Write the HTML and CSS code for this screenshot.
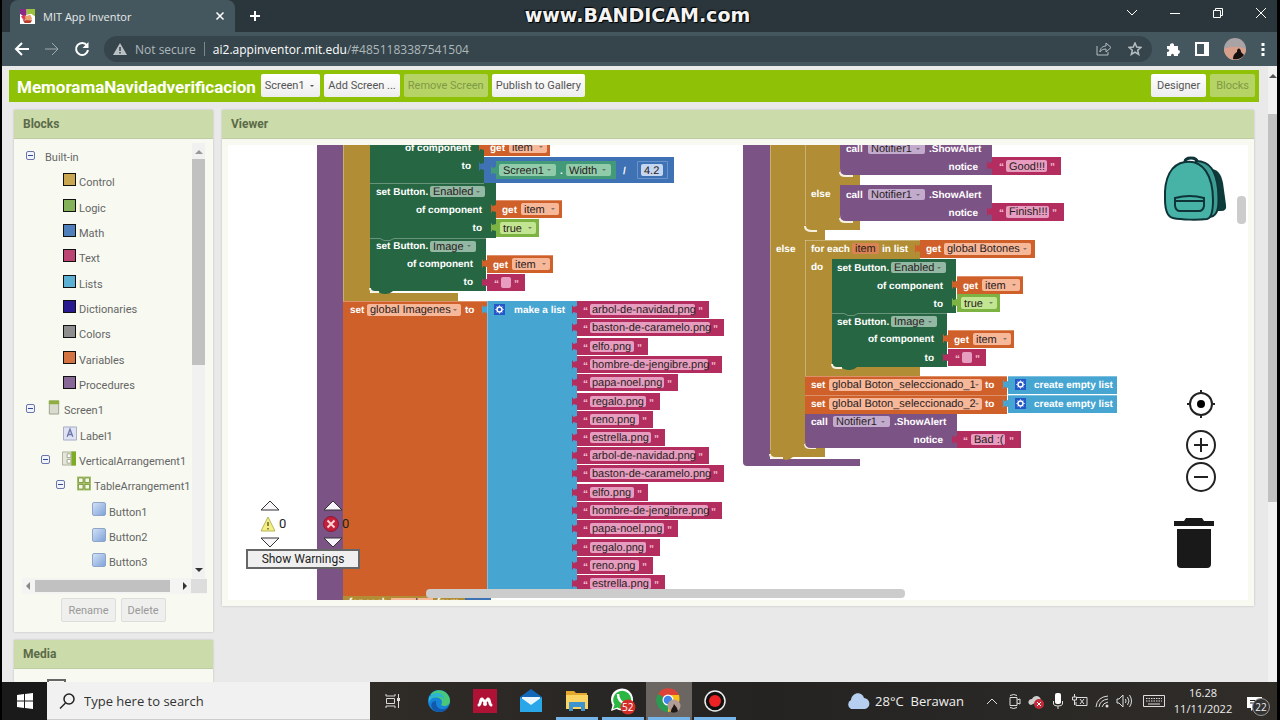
FILE: index.html
```html
<!DOCTYPE html>
<html lang="en">
<head>
<meta charset="utf-8">
<title>MIT App Inventor</title>
<link rel="stylesheet" href="styles.css">
</head>
<body>
<div class="desktop">
  <header class="tabs">
    <div class="tab">
      <svg class="fav" viewBox="0 0 16 16"><path fill="#fff" d="M0 0h16v16H0z"/><path fill="#8a2a86" d="M0 0h7v6L4 8 0 5z"/><path fill="#9bc23c" d="M7 0h9v8l-4-3-5 1z"/><path fill="#d83b5c" d="M1 8l5-2 2 4-4 2z"/><path fill="#e9a06b" d="M5 8l6-2 2 5-6 2z"/><path fill="#b63b2c" d="M3 12h10l-2 3H5z"/></svg>
      <span class="tabname">MIT App Inventor</span>
      <button class="ib" aria-label="Close tab"><svg width="10" height="10" viewBox="0 0 10 10"><path class="ln" stroke-width="1.500" d="M1.500 1.500l7 7M8.500 1.500l-7 7"/></svg></button>
    </div>
    <button class="ib newtab" aria-label="New tab"><svg width="12" height="12" viewBox="0 0 12 12"><path class="ln w2" d="M6 1v10M1 6h10"/></svg></button>
    <div class="winctl">
      <button class="ib" aria-label="Search tabs"><svg width="12" height="12" viewBox="0 0 12 12"><path class="ln" d="M1 3l5 5 5-5"/></svg></button>
      <button class="ib" aria-label="Minimize"><svg width="12" height="12" viewBox="0 0 12 12"><path class="ln" d="M1 6.500h10"/></svg></button>
      <button class="ib" aria-label="Restore"><svg width="12" height="12" viewBox="0 0 12 12"><path class="ln" d="M1.500 3.500h7v7h-7zM3.500 3.500v-2h7v7h-2"/></svg></button>
      <button class="ib" aria-label="Close"><svg width="12" height="12" viewBox="0 0 12 12"><path class="ln" d="M1 1l10 10M11 1L1 11"/></svg></button>
    </div>
  </header>
  <div class="watermark">www.BANDICAM.com</div>
  <nav class="toolbar">
    <button class="ib" aria-label="Back"><svg width="16" height="16" viewBox="0 0 16 16"><path class="ln w2" d="M15 8H2M8 2L2 8l6 6"/></svg></button>
    <button class="ib dim" aria-label="Forward"><svg width="16" height="16" viewBox="0 0 16 16"><path class="ln" d="M1 8h13M8 2l6 6-6 6"/></svg></button>
    <button class="ib" aria-label="Reload"><svg width="16" height="16" viewBox="0 0 16 16"><path class="ln w2" d="M13 4.500A6 6 0 1 0 14 9"/><path fill="#fff" d="M14.500 1v6h-6z"/></svg></button>
    <div class="omni">
      <svg width="14" height="14" viewBox="0 0 14 14"><path fill="#b9c1c4" d="M7 1l7 12H0z"/><path stroke="#36454c" stroke-width="1.500" d="M7 5v4M7 10v1.500"/></svg>
      <span class="unsafe">Not secure</span><span class="bar"></span>
      <span class="url"><b>ai2.appinventor.mit.edu</b>/#4851183387541504</span>
      <svg class="push" width="16" height="14" viewBox="0 0 16 14"><path class="lg" d="M1 4v9h11v-3M4 10c0-4 3-6 6-6V1l5 4.500L10 10V7C7 7 5 8 4 10z"/></svg>
      <svg width="14" height="14" viewBox="0 0 14 14"><path class="lg" stroke-width="1.500" d="M7 1l1.700 4 4.300.400-3.300 2.900 1 4.200L7 10.200 3.300 12.500l1-4.200L1 5.400 5.300 5z"/></svg>
    </div>
    <div class="ext">
      <svg width="14" height="14" viewBox="0 0 14 14"><path fill="#fff" d="M1 4h3C3 1 8 0 8 3v1h4v4c3 0 2 4 0 4v2H8c0-3-3-3-3 0H1v-4c3 0 3-3 0-3z"/></svg>
      <svg width="14" height="14" viewBox="0 0 14 14"><path fill="#fff" d="M0 0h14v14H0zM2 2v10h7V2z" fill-rule="evenodd"/></svg>
      <svg width="22" height="22" viewBox="0 0 22 22"><circle cx="11" cy="11" r="11" fill="#a9a3a5"/><path fill="#d89f8b" d="M0 11a11 11 0 0 0 22 0c-7-3-14-3-22 0z"/><path fill="#15100f" d="M9 21c0-4 2-6 4-7 0-5 4-4 4 0l3 3c-3 4-7 5-11 4z"/></svg>
      <svg width="4" height="14" viewBox="0 0 4 14"><path fill="#fff" d="M.5 1h3v3h-3zM.5 6h3v3h-3zM.5 11h3v3h-3z"/></svg>
    </div>
  </nav>

  <div class="page">
    <main class="app">
      <div class="project">
        <h1>MemoramaNavidadverificacion</h1>
        <button class="btn">Screen1 <i class="car"></i></button>
        <button class="btn">Add Screen ...</button>
        <button class="btn off" disabled>Remove Screen</button>
        <button class="btn">Publish to Gallery</button>
        <button class="btn view push">Designer</button>
        <button class="btn off" disabled>Blocks</button>
      </div>
      <div class="cols">
        <aside class="side">
          <section class="panel">
            <h2>Blocks</h2>
            <div class="treebox">
              <ul class="tree">
                <li><button class="tg" aria-label="Collapse"></button><span class="t1">Built-in</span></li>
                <li class="d1"><i class="sw control"></i>Control</li>
                <li class="d1"><i class="sw logic"></i>Logic</li>
                <li class="d1"><i class="sw math"></i>Math</li>
                <li class="d1"><i class="sw text"></i>Text</li>
                <li class="d1"><i class="sw lists"></i>Lists</li>
                <li class="d1"><i class="sw dict"></i>Dictionaries</li>
                <li class="d1"><i class="sw colors"></i>Colors</li>
                <li class="d1"><i class="sw vars"></i>Variables</li>
                <li class="d1"><i class="sw procs"></i>Procedures</li>
                <li><button class="tg" aria-label="Collapse"></button><svg class="ci" viewBox="0 0 15 15"><path fill="#d9dbcf" stroke="#9ba08c" d="M2.500.5h10v14h-10z"/><path fill="#8fae3f" d="M2 0h11v4H2z"/></svg>Screen1</li>
                <li class="d1"><svg class="ci" viewBox="0 0 15 15"><path fill="#dfe2f2" stroke="#a3a8c4" d="M.5.5h14v14H.5z"/><path fill="none" stroke="#6f78ad" stroke-width="1.500" d="M4.500 11L7.500 3l3 8M5.500 8.500h4"/></svg>Label1</li>
                <li class="d2"><button class="tg" aria-label="Collapse"></button><svg class="ci" viewBox="0 0 15 15"><path fill="#e3e6d8" stroke="#a9ad98" d="M.5.5h14v14H.5z"/><path fill="#7dac25" d="M10 0h5v15h-5z"/><path fill="#fff" stroke="#a0a48e" d="M5.500 2.500h4v4h-4zM5.500 8.500h4v4h-4z"/></svg>VerticalArrangement1</li>
                <li class="d3"><button class="tg" aria-label="Collapse"></button><svg class="ci" viewBox="0 0 15 15"><path fill="#a9c46c" d="M0 0h15v15H0z"/><path fill="#f4f7e8" stroke="#7b9640" d="M1.500 1.500h5v5h-5zM8.500 1.500h5v5h-5zM1.500 8.500h5v5h-5zM8.500 8.500h5v5h-5z"/></svg>TableArrangement1</li>
                <li class="d4"><i class="bi"></i>Button1</li>
                <li class="d4"><i class="bi"></i>Button2</li>
                <li class="d4"><i class="bi"></i>Button3</li>
                <li class="d4"><i class="bi"></i></li>
              </ul>
              <div class="vs"><i class="up"></i><i class="th"></i><i class="dn"></i></div>
            </div>
            <div class="hs"><i class="lf"></i><i class="th"></i><i class="rt"></i><i class="corner"></i></div>
            <div class="acts"><button class="btn off2" disabled>Rename</button><button class="btn off2" disabled>Delete</button></div>
          </section>
          <section class="panel media">
            <h2>Media</h2>
            <div class="upload"></div>
          </section>
        </aside>
        <section class="panel viewer">
          <h2>Viewer</h2>
          <div class="ws">
            <svg class="blocks" width="1020" height="455" viewBox="228 145 1020 455" role="img" aria-label="Blocks workspace">
              <defs>
                <path id="tab" d="M0 0l-4 1v-2l-1 1v7l1 1v-2l4 1z"/>
                <path id="car" d="M0 0h4l-2 2z" fill="#555" fill-opacity=".7"/>
                <g id="gear"><path fill="#2458c8" d="M0 0h11v11H0z"/><circle cx="5.500" cy="5.500" r="2.500" fill="none" stroke="#fff" stroke-width="1.500"/><path stroke="#fff" stroke-opacity=".6" d="M5.500 1v1.500M5.500 8.500V10M1 5.500h1.500M8.500 5.500H10M2.500 2.500l1 1M7.500 7.500l1 1M8.500 2.500l-1 1M3.500 7.500l-1 1"/></g>
                <g id="get"><path class="or" d="M0 0h66v18H0z"/><use href="#tab" class="or" y="5"/><path class="edge" d="M0 .5h66"/><rect class="cor" x="25" y="3" width="38" height="12" rx="2"/><text class="b" x="6" y="13">get</text><text x="28" y="13">item</text><use href="#car" x="55" y="8"/></g>
                <g id="true"><path class="lgn" d="M0 0h43v18H0z"/><use href="#tab" class="lgn" y="5"/><rect class="cgn" x="4" y="3" width="36" height="12" rx="2"/><text x="7" y="13">true</text><use href="#car" x="32" y="8"/></g>
                <g id="empty"><path class="pk" d="M0 0h38v17H0z"/><use href="#tab" class="pk" y="5"/><rect class="cpk" x="14" y="3" width="10" height="11" rx="2"/><text class="q" x="7" y="13">“</text><text class="q" x="27" y="13">”</text></g>
              </defs>

              <path class="pu" d="M317 145h26v455h-26z"/>
              <path class="go" d="M343 145h27v148h88v8H343z"/>
              <path class="gr" d="M370 145h114v38h12v55h-10v53h-93q-3 3-8 3t-8-3h-4q-3 0-3-3z"/>
              <path class="edge" d="M370 183.500h114M370 238.500h10l4 2h6l4-2h92M343.500 145v455"/><path class="lip" d="M370 288q0 4 5 4h4"/>
              <text class="b e" x="471" y="151">of component</text>
              <use href="#get" x="484" y="138"/>
              <text class="b e" x="471" y="169">to</text>
              <path class="ma" d="M484 157h190v26H484z"/><use href="#tab" class="ma" x="484" y="163"/>
              <path class="tl" d="M496 161h120v18H496z"/><use href="#tab" class="tl" x="496" y="167"/>
              <rect class="ctl" x="499" y="164" width="57" height="12" rx="2"/><text x="503" y="174">Screen1</text><use href="#car" x="547" y="169"/>
              <rect class="ctl" x="566" y="164" width="45" height="12" rx="2"/><text x="569" y="174">Width</text><use href="#car" x="602" y="169"/>
              <text class="b" x="560" y="174">.</text><text class="b" x="623" y="174">/</text>
              <path class="slot" d="M637.500 161.500h30v17h-30z"/><rect class="cma" x="641" y="164" width="22" height="12" rx="2"/><text x="644" y="174">4.2</text>
              <text class="b" x="376" y="195">set Button.</text><rect class="cgr" x="430" y="186" width="55" height="11" rx="2"/><text x="433" y="195">Enabled</text><use href="#car" x="476" y="191"/>
              <text class="b e" x="482" y="213">of component</text><use href="#get" x="496" y="200"/>
              <text class="b e" x="482" y="231">to</text><use href="#true" x="496" y="219"/>
              <text class="b" x="376" y="249">set Button.</text><rect class="cgr" x="430" y="241" width="46" height="11" rx="2"/><text x="433" y="250">Image</text><use href="#car" x="467" y="245"/>
              <text class="b e" x="473" y="267">of component</text><use href="#get" x="487" y="255"/>
              <text class="b e" x="473" y="285">to</text><use href="#empty" x="487" y="274"/>

              <path class="or" d="M343 301h144v295H343z"/><path class="edge" d="M343 301.500h144"/>
              <text class="b" x="350" y="313">set</text><rect class="cor" x="367" y="304" width="94" height="12" rx="2"/><text x="370" y="313">global Imagenes</text><use href="#car" x="453" y="309"/><text class="b" x="465" y="313">to</text>
              <path class="bl" d="M487 301h90v295h-90z"/><use href="#tab" class="bl" x="487" y="306"/><path class="edge" d="M487.500 301v295"/>
              <use href="#gear" x="494" y="304"/><text class="b" x="514" y="313">make a list</text>
              <g id="names">
                <path class="pk" d="M577 301h132v17H577zM577 319h147v17H577zM577 338h71v17h-71zM577 356h145v17H577zM577 374h101v17H577zM577 393h83v17h-83zM577 411h76v17h-76zM577 429h88v17h-88z"/>
                <g class="pk"><use href="#tab" x="577" y="306"/><use href="#tab" x="577" y="324"/><use href="#tab" x="577" y="343"/><use href="#tab" x="577" y="361"/><use href="#tab" x="577" y="379"/><use href="#tab" x="577" y="398"/><use href="#tab" x="577" y="416"/><use href="#tab" x="577" y="434"/></g>
                <g class="cpk"><rect x="590" y="304" width="105" height="11" rx="2"/><rect x="590" y="322" width="120" height="11" rx="2"/><rect x="590" y="341" width="44" height="11" rx="2"/><rect x="590" y="359" width="118" height="11" rx="2"/><rect x="590" y="377" width="74" height="11" rx="2"/><rect x="590" y="396" width="56" height="11" rx="2"/><rect x="590" y="414" width="49" height="11" rx="2"/><rect x="590" y="432" width="61" height="11" rx="2"/></g>
                <text x="592" y="313">arbol-de-navidad.png</text><text x="592" y="331">baston-de-caramelo.png</text><text x="592" y="350">elfo.png</text><text x="592" y="368">hombre-de-jengibre.png</text><text x="592" y="386">papa-noel.png</text><text x="592" y="405">regalo.png</text><text x="592" y="423">reno.png</text><text x="592" y="441">estrella.png</text>
                <g class="q"><text x="583" y="314">“</text><text x="583" y="332">“</text><text x="583" y="351">“</text><text x="583" y="369">“</text><text x="583" y="387">“</text><text x="583" y="406">“</text><text x="583" y="424">“</text><text x="583" y="442">“</text><text x="698" y="314">”</text><text x="713" y="332">”</text><text x="637" y="351">”</text><text x="711" y="369">”</text><text x="667" y="387">”</text><text x="649" y="406">”</text><text x="642" y="424">”</text><text x="654" y="442">”</text></g>
              </g>
              <use href="#names" y="146"/>
              <path class="go" d="M343 596h122v4H343z"/><path class="ma" d="M465 596h26v4h-26z"/>
              <text class="b" x="349" y="605">for each</text><rect class="cor" x="391" y="598" width="42" height="11"/><text x="394" y="606">number</text><text class="b" x="437" y="605">from</text>

              <path class="pu" d="M743 145h27v314h90v7H747q-4 0-4-4z"/>
              <path class="go" d="M770 145h70v30h20v10h-20v36h20v9h-35v10h95v136h-115v71h20v10h-32q-3 3-7 3t-7-3h-5q-4 0-4-4z"/>
              <path class="gr" d="M832 259h124v54h-9v54h-90q-3 3-8 3t-8-3h-6q-3 0-3-3z"/>
              <path class="edge" d="M770.500 145v305M805.500 145v80M805.500 240v200M805 240.500h115M832 313.500h12l4 2h6l4-2h89"/>
              <path class="lip" d="M770 454q0 4 5 4h8M805 226q0 5 7 5h5M840 172q0 4 5 4h8M840 218q0 4 5 4h8M805 444q0 4 5 4h6M832 364q0 4 5 4h5"/>
              <path class="pu" d="M840 145h152v30H846q-6 0-6-6zM840 185h152v36H846q-6 0-6-6zM805 413h152v35H811q-6 0-6-6z"/>
              <g id="call"><text class="b" x="846" y="152">call</text><rect class="cpu" x="868" y="143" width="57" height="11" rx="2"/><text x="871" y="152">Notifier1</text><use href="#car" x="916" y="148"/><text class="b" x="929" y="152">.ShowAlert</text><text class="b e" x="978" y="170">notice</text></g>
              <use href="#call" y="46"/><use href="#call" x="-35" y="273"/>
              <path class="pk" d="M992 157h69v18h-69zM992 203h72v18h-72zM957 431h64v17h-64z"/>
              <g class="pk"><use href="#tab" x="992" y="162"/><use href="#tab" x="992" y="208"/><use href="#tab" x="957" y="436"/></g>
              <g class="cpk"><rect x="1006" y="160" width="41" height="12" rx="2"/><rect x="1006" y="206" width="43" height="12" rx="2"/><rect x="971" y="434" width="34" height="11" rx="2"/></g>
              <text x="1009" y="170">Good!!!</text><text x="1009" y="215">Finish!!!</text><text x="974" y="443">Bad :(</text>
              <g class="q"><text x="999" y="170">“</text><text x="1050" y="170">”</text><text x="999" y="216">“</text><text x="1052" y="216">”</text><text x="963" y="444">“</text><text x="1009" y="444">”</text></g>
              <text class="b" x="811" y="197">else</text><text class="b" x="776" y="252">else</text>
              <text class="b" x="811" y="252">for each</text><rect class="itm" x="852" y="243" width="27" height="11" rx="2"/><text x="855" y="252">item</text><text class="b" x="882" y="252">in list</text>
              <path class="or" d="M920 240h115v18H920z"/><use href="#tab" class="or" x="920" y="245"/><text class="b" x="926" y="252">get</text><rect class="cor" x="944" y="243" width="87" height="12" rx="2"/><text x="947" y="252">global Botones</text><use href="#car" x="1023" y="248"/>
              <text class="b" x="811" y="270">do</text>
              <text class="b" x="837" y="271">set Button.</text><rect class="cgr" x="891" y="262" width="55" height="11" rx="2"/><text x="894" y="271">Enabled</text><use href="#car" x="937" y="267"/>
              <text class="b e" x="943" y="289">of component</text><use href="#get" x="957" y="276"/>
              <text class="b e" x="943" y="307">to</text><use href="#true" x="957" y="294"/>
              <text class="b" x="837" y="325">set Button.</text><rect class="cgr" x="891" y="316" width="46" height="11" rx="2"/><text x="894" y="325">Image</text><use href="#car" x="928" y="321"/>
              <text class="b e" x="934" y="342">of component</text><use href="#get" x="948" y="330"/>
              <text class="b e" x="934" y="361">to</text><use href="#empty" x="948" y="349"/>
              <g id="setrow"><path class="or" d="M805 376h202v19H805z"/><path class="bl" d="M1008 376h109v18h-109z"/><use href="#tab" class="bl" x="1008" y="381"/><path class="edge" d="M805 376.500h202M1008 376.500h109"/><text class="b" x="811" y="388">set</text><rect class="cor" x="829" y="379" width="153" height="12" rx="2"/><use href="#car" x="975" y="384"/><text class="b" x="985" y="388">to</text><use href="#gear" x="1015" y="379"/><text class="b" x="1034" y="388">create empty list</text></g>
              <use href="#setrow" y="19"/>
              <text x="832" y="388">global Boton_seleccionado_1</text><text x="832" y="407">global Boton_seleccionado_2</text>
            </svg>
            <div class="warn">
              <div class="counts">
                <div class="cnt"><svg width="20" height="11" viewBox="0 0 20 11"><path class="tri" d="M10 1l9 9H1z"/></svg><span><svg width="16" height="16" viewBox="0 0 16 16"><path fill="#f3ef86" stroke="#b9b458" d="M8 1l7 14H1z"/><path stroke="#8d8838" stroke-width="2" d="M8 6v4M8 12v1.500"/></svg> 0</span><svg width="20" height="11" viewBox="0 0 20 11"><path class="tri" d="M1 1h18l-9 9z"/></svg></div>
                <div class="cnt"><svg width="20" height="11" viewBox="0 0 20 11"><path class="tri" d="M10 1l9 9H1z"/></svg><span><svg width="16" height="16" viewBox="0 0 16 16"><circle cx="8" cy="8" r="7.500" fill="#c4203c" stroke="#8d1b35"/><path stroke="#fbd5d5" stroke-width="2" d="M4.500 4.500l7 7M11.500 4.500l-7 7"/></svg> 0</span><svg width="20" height="11" viewBox="0 0 20 11"><path class="tri" d="M1 1h18l-9 9z"/></svg></div>
              </div>
              <button class="show">Show Warnings</button>
            </div>
            <button class="ov pack" aria-label="Backpack"><svg width="64" height="66" viewBox="0 0 64 66"><path fill="#0d3b3a" d="M44 13c10-1 14 4 16 14l3 22q1 6-5 6h-8l5-6-2-22q-2-9-9-10z"/><path fill="#3b9c93" stroke="#0e3438" stroke-width="2" d="M33 5c14 0 20 10 22 28 1 14 1 24-5 27l-10 3z"/><path fill="#47b3a7" stroke="#0e3438" stroke-width="2" d="M22 6C8 8 1 22 2 43c0 13 3 18 8 19 9 2 25 2 34 1 5-1 6-9 6-19C50 20 40 3 22 6z"/><path fill="none" stroke="#0e3438" stroke-width="3" d="M22 6q0-4 6-4t6 4"/><path fill="none" stroke="#0e3438" stroke-width="2" d="M12 42q15-4 29 0v8q-1 5-5 5H17q-4 0-5-5zM12 45h29"/></svg></button>
            <div class="ov zoom">
              <button aria-label="Center"><svg width="30" height="30" viewBox="0 0 30 30"><circle class="ring" cx="15" cy="15" r="11"/><circle cx="15" cy="15" r="4"/><path class="ring" d="M15 1v4M15 25v4M1 15h4M25 15h4"/></svg></button>
              <button aria-label="Zoom in"><svg width="32" height="32" viewBox="0 0 32 32"><circle class="ring" cx="16" cy="16" r="14"/><path class="ring" d="M16 9v14M9 16h14"/></svg></button>
              <button aria-label="Zoom out"><svg width="32" height="32" viewBox="0 0 32 32"><circle class="ring" cx="16" cy="16" r="14"/><path class="ring" d="M9 16h14"/></svg></button>
            </div>
            <button class="ov trash" aria-label="Trash"><svg width="40" height="52" viewBox="0 0 40 52"><path fill="#191919" d="M0 4h10l2-3h16l2 3h10v5H0zM3 12h34v35q0 4-4 4H7q-4 0-4-4z"/></svg></button>
            <i class="ov sbv"></i><i class="ov sbh"></i>
          </div>
        </section>
      </div>
    </main>
    <div class="scroll"><i class="up"></i><i class="th"></i></div>
  </div>

  <footer class="task">
    <button class="start" aria-label="Start"><svg width="16" height="16" viewBox="0 0 16 16"><path fill="#fff" d="M0 2l7-1v6.500H0zM8 1l8-1v7.500H8zM0 8.500h7V15l-7-1zM8 8.500h8V16l-8-1z"/></svg></button>
    <label class="find"><svg width="18" height="18" viewBox="0 0 18 18"><circle cx="11" cy="7" r="5" fill="none" stroke="#222" stroke-width="1.500"/><path stroke="#222" stroke-width="1.500" d="M7.500 11L2 16.500"/></svg><input type="text" placeholder="Type here to search" aria-label="Type here to search"></label>
    <div class="apps">
      <button aria-label="Task view"><svg width="16" height="16" viewBox="0 0 16 16"><path fill="none" stroke="#ddd" d="M1 1v2h9V1M1.500 5.500h8v5h-8zM1 15v-2h9v2M13.500 1v14"/><path fill="#ddd" d="M12 5h3v3h-3z"/></svg></button>
      <button aria-label="Edge"><svg width="24" height="24" viewBox="0 0 24 24"><circle cx="12" cy="12" r="11" fill="#1683d8"/><path fill="#48c878" d="M4 5C11-3 23 3 23 12c0 5-6 6-9 4 3-5-1-9-10-7z"/><path fill="#2ab4d8" d="M2 8C8 1 17 4 17 10c-5-4-11-3-15 3z"/><path fill="#1159ad" d="M9 12c-1 8 7 11 13 5-3 6-9 7-14 5-6-4-4-10 1-10z"/></svg></button>
      <button aria-label="Mendeley"><svg width="24" height="24" viewBox="0 0 24 24"><path fill="#b01235" d="M0 0h24v24H0z"/><path fill="none" stroke="#fff" stroke-width="3" stroke-linecap="round" d="M6 16c2-1 1-6 3-6l3 3 3-3c2 0 1 5 3 6"/><circle cx="12" cy="15" r="2" fill="#fff"/></svg></button>
      <button aria-label="Mail"><svg width="24" height="24" viewBox="0 0 24 24"><path fill="#1268b8" d="M1 8l11-8 11 8v15H1z"/><path fill="#e9f6ff" d="M3 8h18v8H3z"/><path fill="#29a7e9" d="M1 8l11 8 11-8v15H1z"/></svg></button>
      <button class="run" aria-label="File Explorer"><svg width="24" height="22" viewBox="0 0 24 22"><path fill="#e2a92e" d="M1 1h8l2 2h11v4H1z"/><path fill="#fbd564" d="M1 5h22v14H1z"/><path fill="#3f94cf" d="M4 12h16v9h-4v-4H8v4H4z"/></svg></button>
      <button class="run" aria-label="WhatsApp"><svg width="26" height="28" viewBox="0 0 26 28"><path fill="#fff" d="M1 24L2.500 18a11 11 0 1 1 4 4z"/><path fill="#2cb742" d="M3 22l1.500-4.500a9 9 0 1 1 3 3z"/><path fill="none" stroke="#fff" stroke-width="2.500" d="M8 7c0 6 4 9 8 10l2-2"/><circle cx="18" cy="20" r="7.500" fill="#d32d27"/></svg><span class="n52">52</span></button>
      <button class="run act" aria-label="Chrome"><svg width="26" height="26" viewBox="0 0 26 26"><path fill="#db4437" d="M12 12L2 6a12 12 0 0 1 21 1z"/><path fill="#fbc116" d="M12 12V7h11c2 7-2 16-11 17z"/><path fill="#2a9b50" d="M12 12L2 6c-5 8 1 18 10 18z"/><circle cx="12" cy="12" r="5.500" fill="#fff"/><circle cx="12" cy="12" r="4.300" fill="#4285e8"/><circle cx="18" cy="18" r="6.500" fill="#b39b96"/><path fill="#1d1716" d="M15 24c0-4 2-4 3-8l3 4 1 3c-2 2-5 2-7 1z"/></svg></button>
      <button class="run" aria-label="Recorder"><svg width="24" height="24" viewBox="0 0 24 24"><circle cx="12" cy="12" r="10" fill="#111" stroke="#eee" stroke-width="1.500"/><circle cx="12" cy="12" r="6" fill="#ec2224"/></svg></button>
    </div>
    <div class="tray">
      <svg width="24" height="16" viewBox="0 0 24 16"><path fill="#b6cff0" d="M5 16a5 5 0 0 1 0-9c1-8 11-9 13-2 7 1 7 10 1 11z"/></svg>
      <span class="wx">28°C&nbsp; Berawan</span>
      <svg class="c" viewBox="0 0 18 18"><path class="lt" d="M4 12l5-5 5 5"/></svg>
      <svg class="c" viewBox="0 0 18 18"><path class="lt" d="M5 5.500h7v8H5zM12 8l3-1v5l-3-1M5 3.500q4-2 7 0M5 15.500q4 2 7 0"/></svg>
      <svg class="c" viewBox="0 0 18 18"><path fill="#cfcfcf" d="M4 13c-4-1-3-6 1-6 2-4 8-4 9 1z"/><circle cx="12" cy="12" r="5" fill="#c42b3a"/><path stroke="#fff" d="M10 10l4 4M14 10l-4 4"/></svg>
      <svg class="c" viewBox="0 0 18 18"><rect x="6" y="1" width="6" height="11" rx="2" fill="#fff"/><path class="lt" d="M4.500 9v3q0 2 4.500 2t4.500-2V9M9 14v3"/></svg>
      <svg class="c" viewBox="0 0 18 18"><path class="lt" d="M6 5.500h10v8H5V10M1.500 5h4v3h-4zM3.500 2v3M3.500 8v5M9 7l4 5M13 7l-4 5"/></svg>
      <svg class="c" viewBox="0 0 18 18"><path class="lt" d="M3 15Q4 5 15 4M6 15q1-7 9-8M9 15q1-4 6-5"/><circle cx="14" cy="14" r="1.500" fill="#ddd"/></svg>
      <svg class="c" viewBox="0 0 18 18"><path class="lt" d="M2 7h2l4-4v12l-4-4H2zM10.500 7q1 2 0 4M12.500 5q3 4 0 8M14.500 3q4 6 0 12"/></svg>
      <svg class="kb" width="22" height="12" viewBox="0 0 22 12"><path class="lt" d="M.5.5h21v11H.5z"/><path stroke="#ddd" stroke-dasharray="1.500 1" d="M3 3.500h16M3 6h16"/><path stroke="#ddd" d="M5 9h12"/></svg>
      <div class="clock"><span>16.28</span><span>11/11/2022</span></div>
      <button class="note" aria-label="Notifications"><svg width="16" height="16" viewBox="0 0 16 16"><path fill="#fff" d="M0 1h15v11H7l-3 3v-3H0z"/><path stroke="#26221f" d="M3 4.500h9M3 7h9"/></svg><span>22</span></button>
    </div>
  </footer>
</div>
</body>
</html>
```
FILE: styles.css
```css
* { box-sizing: border-box; }
body { margin: 0; background: #000; font-family: Roboto, sans-serif; }
button { font: inherit; margin: 0; padding: 0; border: 0; background: none; color: inherit; }
svg { display: block; flex: none; }
h1, h2, ul { margin: 0; padding: 0; }
.desktop { position: relative; display: flex; flex-direction: column; height: 100vh; padding: 0 3px 0 2px; overflow: hidden; }
.push { margin-left: auto; }
.ln, .lg, .lt { fill: none; stroke: #fff; }
.lg { stroke: #b6bfc2; }
.lt { stroke: #ddd; }
.w2 { stroke-width: 2; }

/* browser frame */
.tabs { display: flex; height: 32px; flex: none; background: #2a363b; padding-left: 8px; align-items: stretch; font: 12px "Open Sans", sans-serif; color: #e6eaeb; }
.tab { display: flex; align-items: center; width: 225px; padding: 0 10px; gap: 8px; background: #45575e; border-radius: 8px 8px 0 0; }
.tab .ib { margin-left: auto; }
.fav { width: 15px; height: 15px; }
.tabname { font-size: 11px; }
.newtab { margin-left: 14px; }
.winctl { display: flex; gap: 31px; margin-left: auto; align-items: center; padding: 0 10px 6px 0; }
.watermark { position: absolute; top: 4px; left: 0; right: 5px; text-align: center; font: bold 19px/22px "DejaVu Sans", sans-serif; color: #f4f4f4; text-shadow: 1px 1px 1px #000, -1px -1px 1px #000; }
.toolbar { display: flex; align-items: center; height: 34px; flex: none; background: #45575e; padding: 0 12px 0 12px; gap: 14px; font: 12px "Open Sans", sans-serif; }
.dim { opacity: .5; }
.omni { flex: 1; display: flex; align-items: center; gap: 8px; height: 26px; margin-left: 0; padding: 0 10px 0 9px; border-radius: 13px; background: #36454c; color: #aeb8bb; }
.omni .push + svg { margin-left: 8px; }
.omni b { font-weight: 400; color: #fff; }
.bar { width: 1px; height: 14px; background: #7b888d; }
.ext { display: flex; align-items: center; gap: 15px; }

/* page */
.page { flex: 1; min-height: 0; display: flex; background: #e9e9e9; }
.app { flex: 1; min-width: 0; padding: 4px 9px 0 7px; overflow: hidden; }
.scroll { width: 9px; background: #f1f1f1; display: flex; flex-direction: column; }
.scroll .up { margin: 8px 0 36px 1px; }
.scroll .th { height: 388px; background: #c1c1c1; }
.up, .dn, .lf, .rt { width: 0; height: 0; border: 4px solid transparent; }
.up { border-top: 0; border-bottom-color: #555; }
.dn { border-bottom: 0; border-top-color: #333; }
.lf { border-left: 0; border-right-color: #888; }
.rt { border-right: 0; border-left-color: #333; }
.project { display: flex; align-items: flex-start; gap: 4px; height: 32px; padding: 4px 4px 0 8px; background: #8fc206; }
.project h1 { font-size: 17px; line-height: 27px; color: #fff; margin-right: 1px; }
.btn { height: 23px; padding: 0 4px; border-radius: 2px; background: linear-gradient(#fff, #ededed); color: #555; font-size: 11px; white-space: nowrap; }
.btn.off { background: #b6d366; color: #7f9a45; }
.btn.view, .btn.view + .btn { padding: 0 6px; }
.btn.off2 { height: 24px; padding: 0 6px; background: #efefed; border: 1px solid #ddd; color: #999; }
.car { display: inline-block; border: 2px solid transparent; border-top-color: #555; border-bottom: 0; vertical-align: middle; margin: 0 2px 0 3px; }
.cols { display: flex; gap: 9px; align-items: flex-start; padding: 8px 5px 0; }
.side { width: 199px; flex: none; display: flex; flex-direction: column; gap: 8px; }
.panel { background: #f8faf1; box-shadow: 0 0 2px #bbb; }
.panel h2 { height: 29px; padding-left: 9px; background: #cbdcaa; border-bottom: 1px solid #bfcba4; font-size: 12px; line-height: 29px; color: #5b6a48; }
.side .panel:first-child { height: 522px; }
.treebox { display: flex; height: 439px; overflow: hidden; padding: 4px 8px 0 12px; }
.tree { flex: 1; min-width: 0; height: 458px; padding-top: 2px; list-style: none; display: flex; flex-direction: column; font-size: 11px; color: #666; overflow: hidden; }
.tree li { flex: 1; min-height: 0; display: flex; align-items: center; gap: 3px; white-space: nowrap; }
.tg { position: relative; width: 9px; height: 9px; border: 1px solid #6b76a8; border-radius: 2px; background: #f2f4fb; margin: 0 9px 5px 0; flex: none; }
.tg::after { content: ""; position: absolute; left: 1px; right: 1px; top: 3px; height: 1px; background: #334a94; }
.t1 { margin-left: -2px; }
.d1 { padding-left: 37px; }
.d2 { padding-left: 15px; }
.d3 { padding-left: 30px; }
.d4 { padding-left: 66px; }
.ci { width: 14px; height: 15px; margin-bottom: 6px; }
.sw { width: 13px; height: 13px; border: 1px solid #111; margin-bottom: 6px; }
.control { background: #c9a750; }
.logic { background: #83b25a; }
.math { background: #4f80bb; }
.text { background: #bd4574; }
.lists { background: #5bb0d3; }
.dict { background: #2a1a90; }
.colors { background: #8e8e8e; }
.vars { background: #d27341; }
.procs { background: #876897; }
.bi { width: 14px; height: 14px; border: 1px solid #8fa4c8; border-radius: 2px; background: linear-gradient(135deg, #d2e0f5, #7fa4da); margin-bottom: 6px; }
.vs { width: 13px; background: #f1f1f1; display: flex; flex-direction: column; align-items: center; padding: 7px 0 6px; }
.vs .up { border-bottom-color: #999; }
.vs .th { width: 100%; height: 206px; margin-top: 5px; background: #c1c1c1; }
.vs .dn { margin-top: auto; }
.hs { display: flex; align-items: center; height: 16px; margin: 0 6px 0 8px; padding-left: 4px; background: #f4f4f2; }
.hs .th { flex: 1; height: 12px; margin: 0 13px 0 5px; background: #c1c1c1; }
.hs .corner { width: 16px; height: 14px; margin-left: 4px; background: #ddd; }
.acts { display: flex; justify-content: center; gap: 5px; padding: 4px 0 0; }
.media .upload { height: 40px; padding: 10px 0 0 33px; }
.media .upload::before { content: ""; display: block; width: 15px; height: 15px; border: 2px solid #666; }
.viewer { flex: 1; min-width: 0; padding-bottom: 6px; }
.ws { position: relative; height: 455px; margin: 6px 6px 0; background: #fff; overflow: hidden; }

/* block canvas */
.blocks text { font: 11px "Liberation Sans", Arial, sans-serif; fill: #2a1c1c; text-rendering: geometricPrecision; }
.blocks text.b { font-size: 10px; font-weight: 700; fill: #fff; }
.blocks .e { text-anchor: end; }
.blocks text.q, .blocks .q text { font-size: 10px; font-weight: 700; fill: #f3c4d8; }
.edge { fill: none; stroke: #fff; stroke-opacity: .3; }
.lip { fill: none; stroke: #f6f0e0; stroke-width: 2; }
.pu { fill: #7c5385; } .go { fill: #b18e35; } .gr { fill: #266643; }
.or { fill: #cf602a; } .bl { fill: #47a5d2; } .pk { fill: #b32d5e; }
.ma { fill: #3f71b5; } .tl { fill: #439a78; } .lgn { fill: #7cb342; }
.cor { fill: #f7b799; } .cgn { fill: #c2e591; } .cpk { fill: #e79dbf; }
.cgr { fill: #93b8a3; } .ctl { fill: #90cbaa; } .cma { fill: #c5d6f0; } .cpu { fill: #c3abcd; }
.itm { fill: #da8455; }
.slot { fill: none; stroke: #6b93cb; }

.ov, .warn { position: absolute; }
.warn { left: 18px; bottom: 31px; font-size: 13px; color: #222; }
.counts { display: flex; gap: 36px; padding-left: 14px; }
.cnt { display: flex; flex-direction: column; gap: 2px; width: 27px; }
.cnt > span { display: flex; align-items: center; gap: 3px; height: 22px; line-height: 22px; }
.tri { fill: #f7f4fa; stroke: #333; }
.show { display: block; width: 114px; height: 20px; margin-top: 1px; border: 2px solid #666; background: #efefef; font-size: 12px; }
.pack { right: 21px; top: 11px; }
.zoom { right: 31px; bottom: 107px; display: flex; flex-direction: column; align-items: center; }
.zoom button + button { margin-top: 10px; }
.zoom button:last-child { margin-top: 0; }
.ring { fill: none; stroke: #222; stroke-width: 2; }
.trash { right: 34px; bottom: 31px; }
.sbv { right: 2px; top: 51px; width: 9px; height: 28px; border-radius: 4px; background: #ccc; }
.sbh { left: 198px; width: 47%; bottom: 2px; height: 9px; border-radius: 4px; background: #ccc; }

/* taskbar */
.task { display: flex; height: 38px; flex: none; background: linear-gradient(90deg, #3a342c, #242322 60%, #302d29); font: 13px "Open Sans", sans-serif; color: #eee; }
.start { width: 45px; display: flex; align-items: center; justify-content: center; background: #1a1a1a; }
.find { width: 323px; display: flex; align-items: center; gap: 8px; padding-left: 11px; background: #f1f1f1; border: 1px solid #ccc; border-width: 0 0 1px; }
.find input { flex: 1; min-width: 0; border: 0; padding: 0; background: none; font: inherit; color: #333; }
.find input::placeholder { color: #333; opacity: 1; }
.apps { display: flex; }
.apps button { position: relative; width: 46px; display: flex; align-items: center; justify-content: center; border-bottom: 3px solid transparent; padding-top: 3px; }
.apps .run { border-image: linear-gradient(90deg, transparent 10%, #76b5ea 10%, #76b5ea 90%, transparent 90%) 3; }
.apps .act { background: #6b6662; }
.n52 { position: absolute; left: 22px; top: 16px; font-size: 10px; line-height: 18px; color: #fff; }
.tray { margin-left: auto; display: flex; align-items: center; }
.wx { margin: 0 19px 0 5px; }
.c { width: 18px; height: 18px; margin-right: 4px; }
.kb { margin: 0 9px 0 6px; }
.clock { display: flex; flex-direction: column; align-items: center; font-size: 11px; line-height: 16px; width: 58px; }
.note { position: relative; width: 38px; height: 34px; padding: 5px 0 0 8px; margin-left: 7px; }
.note span { position: absolute; left: 13px; top: 14px; width: 18px; height: 18px; border: 1px solid #999; border-radius: 9px; background: #333; font-size: 10px; line-height: 16px; text-align: center; }
```
